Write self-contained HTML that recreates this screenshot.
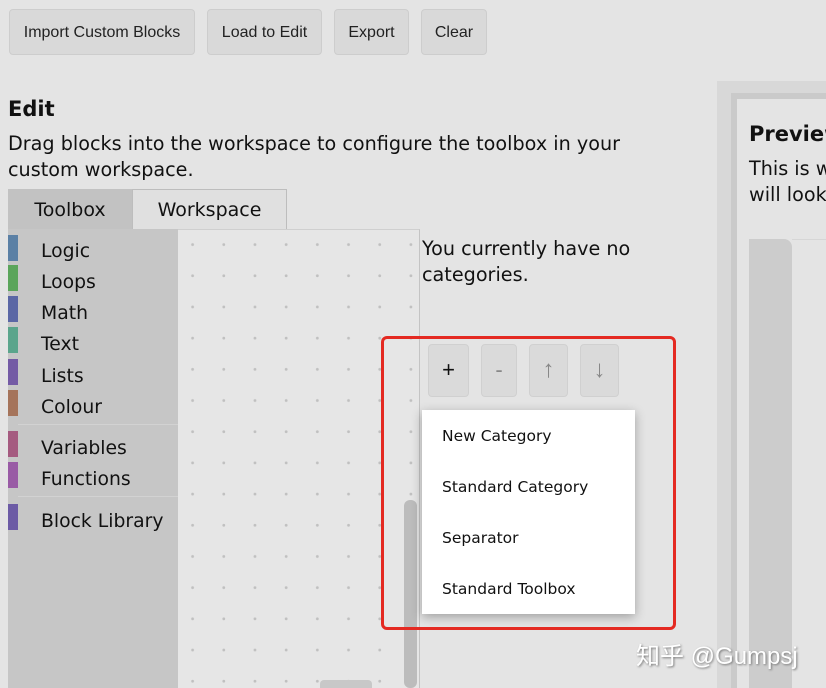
<!DOCTYPE html>
<html><head><meta charset="utf-8"><style>
*{margin:0;padding:0;box-sizing:border-box}
html,body{width:826px;height:688px;overflow:hidden}
body{background:#e4e4e4;position:relative;font-family:"Liberation Sans",sans-serif;color:#111}
.a{position:absolute}
.btn{position:absolute;top:9px;height:46px;background:#d9d9d9;border:1px solid #cdcdcd;border-radius:4px;font-size:16px;line-height:46px;text-align:center;color:#222}
.s{font-family:"DejaVu Sans","Liberation Sans",sans-serif}
.t{font-size:19.2px;white-space:nowrap}
.bar{position:absolute;left:8px;width:10px;height:26px}
.it{position:absolute;left:41px;font-size:18.8px;line-height:24px}
.sb{position:absolute;top:344px;height:53px;background:#dadada;border:1px solid #d0d0d0;border-radius:4px;text-align:center;line-height:50px;font-size:24px;color:#888}
.mi{position:absolute;left:20px;font-size:15.5px}
</style></head><body>
<div class="btn" style="left:9px;width:186px">Import Custom Blocks</div>
<div class="btn" style="left:207px;width:115px">Load to Edit</div>
<div class="btn" style="left:334px;width:75px">Export</div>
<div class="btn" style="left:421px;width:66px">Clear</div>

<div class="a s" style="left:8px;top:97px;font-size:21px;font-weight:bold">Edit</div>
<div class="a s t" style="left:8px;top:131px;line-height:26px">Drag blocks into the workspace to configure the toolbox in your<br>custom workspace.</div>

<div class="a s" style="left:8px;top:189px;width:124px;height:40px;background:#c2c2c2;font-size:19px;text-align:center;line-height:42px">Toolbox</div>
<div class="a s" style="left:132px;top:189px;width:155px;height:41px;background:#e0e0e0;border:1px solid #bdbdbd;font-size:19px;text-align:center;line-height:40px">Workspace</div>

<div class="a" style="left:8px;top:229px;width:170px;height:459px;background:#c6c6c6"></div>
<div class="bar" style="top:235px;background:#5b80a5"></div>
<div class="bar" style="top:265px;background:#5ba55b"></div>
<div class="bar" style="top:296px;background:#5b67a5"></div>
<div class="bar" style="top:327px;background:#5ba58c"></div>
<div class="bar" style="top:359px;background:#745ba5"></div>
<div class="bar" style="top:390px;background:#a5745b"></div>
<div class="a" style="left:18px;top:424px;width:160px;height:1px;background:#d2d2d2"></div>
<div class="bar" style="top:431px;background:#a55b80"></div>
<div class="bar" style="top:462px;background:#995ba5"></div>
<div class="a" style="left:18px;top:496px;width:160px;height:1px;background:#d2d2d2"></div>
<div class="bar" style="top:504px;background:#6c5ba5"></div>
<div class="it s" style="top:240px">Logic</div>
<div class="it s" style="top:271px">Loops</div>
<div class="it s" style="top:302px">Math</div>
<div class="it s" style="top:333px">Text</div>
<div class="it s" style="top:365px">Lists</div>
<div class="it s" style="top:396px">Colour</div>
<div class="it s" style="top:437px">Variables</div>
<div class="it s" style="top:468px">Functions</div>
<div class="it s" style="top:510px">Block Library</div>

<div class="a" style="left:178px;top:229px;width:242px;height:459px;border-top:1px solid #cfcfcf;border-right:1px solid #c4c4c4;background-color:#e6e6e6;background-image:radial-gradient(circle,#c0c0c0 1.3px,transparent 1.6px);background-size:31.2px 31.2px;background-position:-1px -1px"></div>
<div class="a" style="left:404px;top:500px;width:13px;height:188px;background:#bcbcbc;border-radius:6px"></div>
<div class="a" style="left:320px;top:680px;width:52px;height:8px;background:#c8c8c8;border-radius:4px 4px 0 0"></div>

<div class="a s t" style="left:422px;top:236px;line-height:26px">You currently have no<br>categories.</div>

<div class="sb" style="left:428px;width:41px;color:#111;font-size:22px">+</div>
<div class="sb" style="left:481px;width:36px;font-size:22px">-</div>
<div class="sb" style="left:529px;width:39px">↑</div>
<div class="sb" style="left:580px;width:39px">↓</div>

<div class="a s" style="left:422px;top:410px;width:213px;height:204px;background:#fff;box-shadow:0 3px 10px rgba(0,0,0,.3)">
<div class="mi" style="top:17px">New Category</div>
<div class="mi" style="top:68px">Standard Category</div>
<div class="mi" style="top:119px">Separator</div>
<div class="mi" style="top:170px">Standard Toolbox</div>
</div>
<div class="a" style="left:381px;top:336px;width:295px;height:294px;border:3px solid #e42a22;border-radius:6px"></div>

<div class="a" style="left:717px;top:81px;width:109px;height:607px;background:#d8d8d8;overflow:hidden">
<div class="a" style="left:14px;top:12px;width:95px;height:595px;background:#cacaca"></div>
<div class="a" style="left:20px;top:18px;width:89px;height:589px;background:#e4e4e4;overflow:hidden">
<div class="a s" style="left:12px;top:23px;font-size:21px;font-weight:bold;white-space:nowrap">Preview</div>
<div class="a s t" style="left:12px;top:57px;line-height:26px">This is what<br>will look</div>
<div class="a" style="left:12px;top:140px;width:43px;height:449px;background:#cccccc;border-radius:0 8px 0 0"></div>
<div class="a" style="left:55px;top:140px;width:34px;height:1px;background:#d6d6d6"></div>
</div>
</div>

<div class="a" style="left:636px;top:636px;font-size:24px;color:#fff;text-shadow:1px 1px 2px #777;font-family:'Liberation Sans','Noto Sans CJK SC',sans-serif;white-space:nowrap">知乎 @Gumpsj</div>
</body></html>
